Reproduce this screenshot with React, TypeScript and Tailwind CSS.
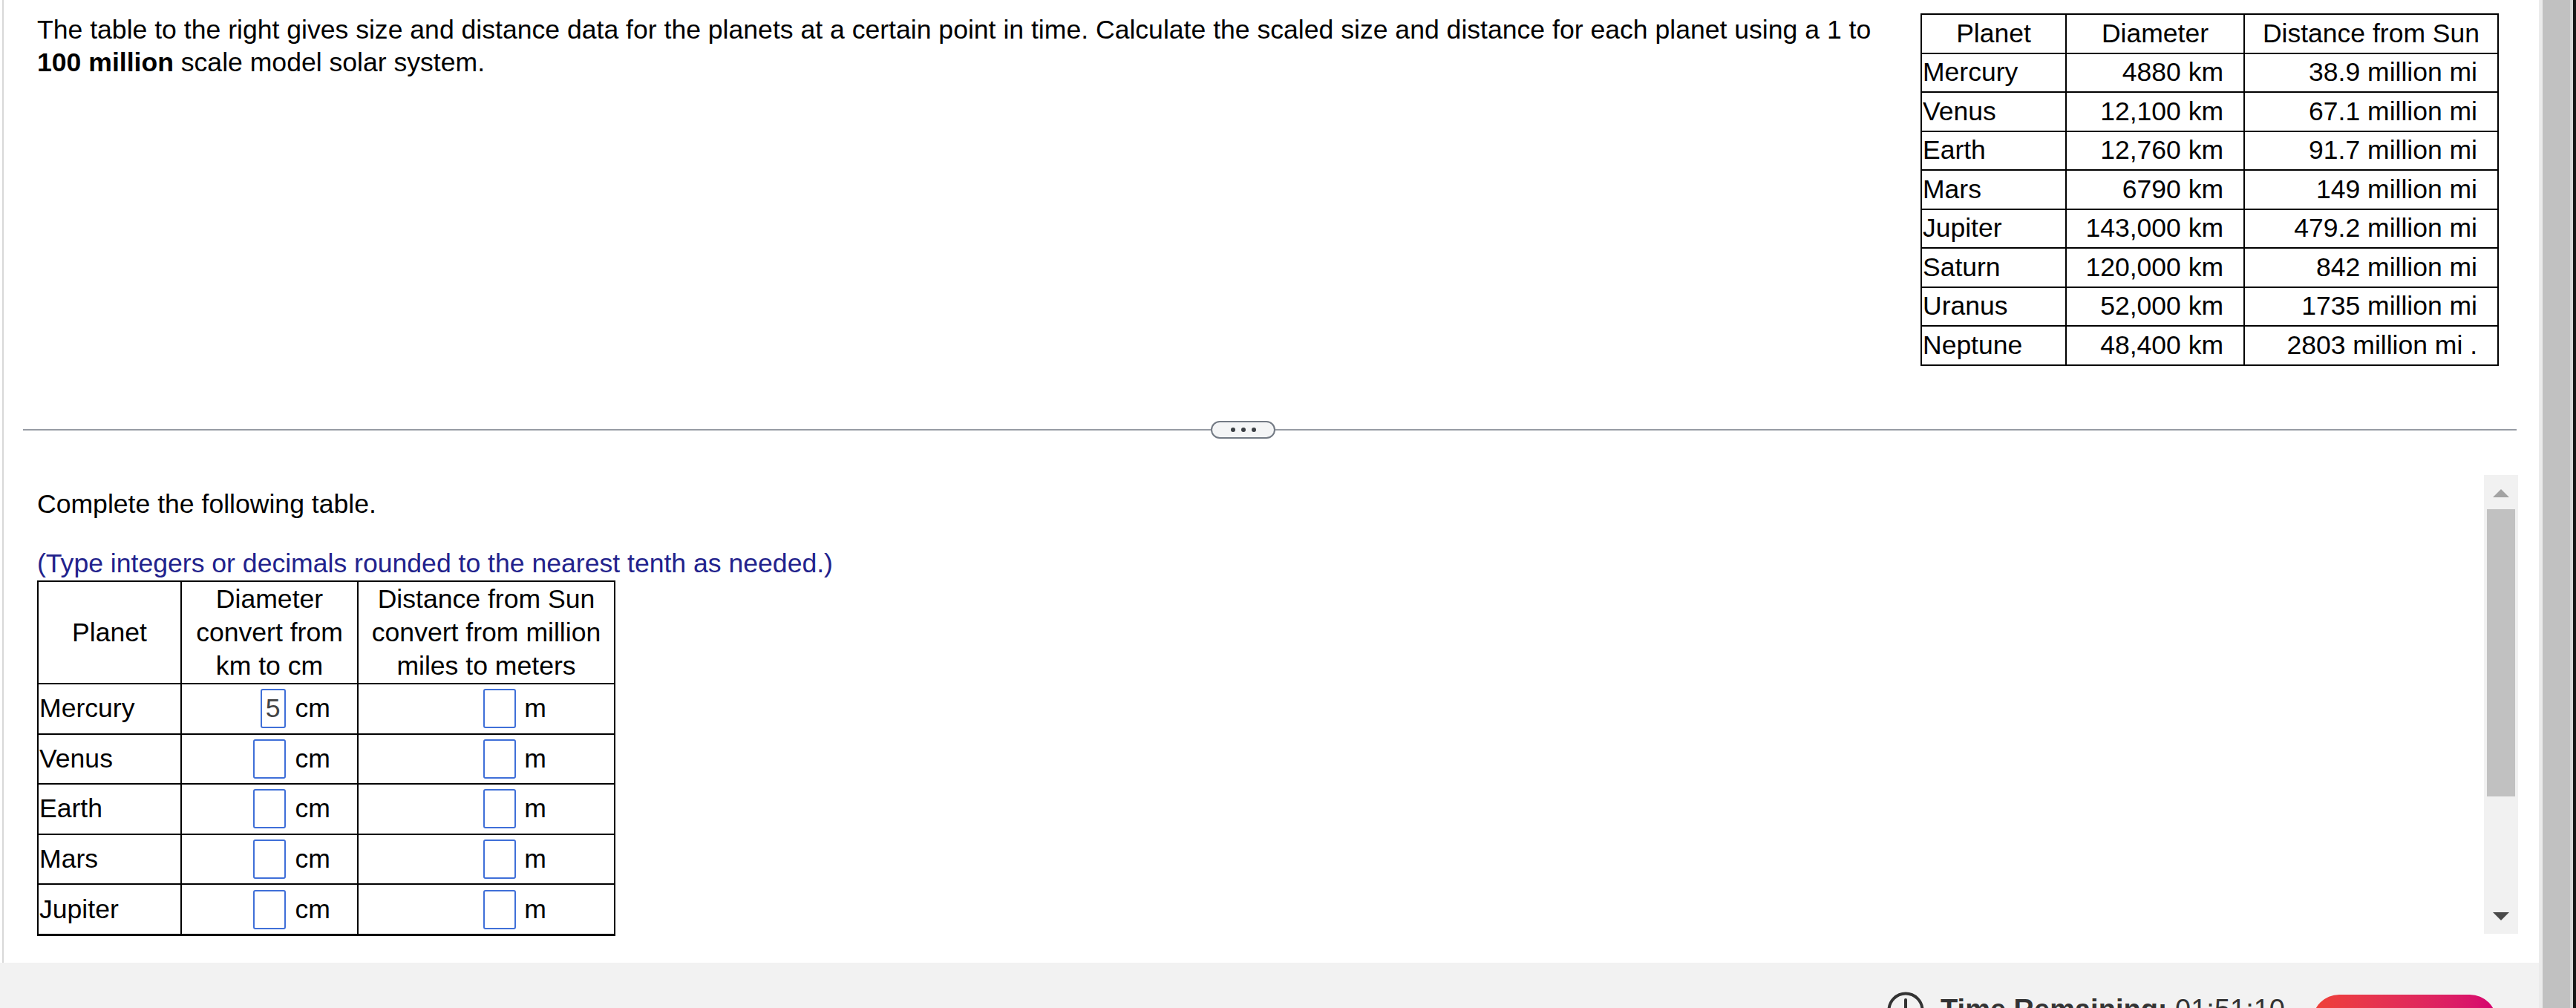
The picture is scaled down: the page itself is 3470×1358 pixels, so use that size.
import React from "react";

const planets: [string, string, string][] = [
  ["Mercury", "4880 km", "38.9 million mi"],
  ["Venus", "12,100 km", "67.1 million mi"],
  ["Earth", "12,760 km", "91.7 million mi"],
  ["Mars", "6790 km", "149 million mi"],
  ["Jupiter", "143,000 km", "479.2 million mi"],
  ["Saturn", "120,000 km", "842 million mi"],
  ["Uranus", "52,000 km", "1735 million mi"],
  ["Neptune", "48,400 km", "2803 million mi ."],
];

const answerRows = ["Mercury", "Venus", "Earth", "Mars", "Jupiter"];

function DataTable() {
  return (
    <div className="shrink-0 w-[779px] border-x-2 border-b-2 border-black text-[35.5px] leading-[43px] text-black">
      <div className="flex h-[52.5px] border-t-2 border-black">
        <div className="w-[195px] border-r-2 border-black flex items-center justify-center">Planet</div>
        <div className="w-[240px] border-r-2 border-black flex items-center justify-center">Diameter</div>
        <div className="flex-1 flex items-center justify-center">Distance from Sun</div>
      </div>
      {planets.map(([name, dia, dist]) => (
        <div key={name} className="flex h-[52.5px] border-t-2 border-black">
          <div className="w-[195px] border-r-2 border-black flex items-center pl-[1px]">{name}</div>
          <div className="w-[240px] border-r-2 border-black flex items-center justify-end pr-[27px] whitespace-pre">{dia}</div>
          <div className="flex-1 flex items-center justify-end pr-[27px] whitespace-pre">{dist}</div>
        </div>
      ))}
    </div>
  );
}

function AnswerBox({ value }: { value?: string }) {
  return (
    <div
      className={
        value
          ? "w-[34px] h-[53px] border-2 border-[#3f6fd8] rounded-[3px] bg-white flex items-center justify-center text-[#444]"
          : "w-[44px] h-[53px] border-2 border-[#3f6fd8] rounded-[3px] bg-white"
      }
    >
      {value}
    </div>
  );
}

function AnswerTable() {
  return (
    <div className="mt-px w-[779px] border-x-2 border-b-[3px] border-black text-[35.6px] text-black">
      <div className="flex h-[138px] border-t-2 border-black leading-[45px]">
        <div className="w-[193px] border-r-2 border-black flex items-center justify-center">Planet</div>
        <div className="w-[238px] border-r-2 border-black flex flex-col items-center justify-center text-center">
          <span>Diameter</span>
          <span>convert from</span>
          <span>km to cm</span>
        </div>
        <div className="flex-1 flex flex-col items-center justify-center text-center">
          <span>Distance from Sun</span>
          <span>convert from million</span>
          <span>miles to meters</span>
        </div>
      </div>
      {answerRows.map((name, i) => (
        <div key={name} className="flex h-[67.6px] border-t-2 border-black leading-[43px]">
          <div className="w-[193px] border-r-2 border-black flex items-center pl-[1px]">{name}</div>
          <div className="w-[238px] border-r-2 border-black flex items-center justify-end gap-[13px] pr-[36px]">
            <AnswerBox value={i === 0 ? "5" : undefined} />
            <span>cm</span>
          </div>
          <div className="flex-1 flex items-center justify-end gap-[11px] pr-[91px]">
            <AnswerBox />
            <span>m</span>
          </div>
        </div>
      ))}
    </div>
  );
}

function Scrollbar() {
  return (
    <div className="w-[46px] h-full bg-[#f1f1f1] flex flex-col shrink-0">
      <div className="h-[46px] flex items-center justify-center pt-[2px]">
        <div className="w-0 h-0 border-x-[11px] border-x-transparent border-b-[11px] border-b-[#a3a3a3]" />
      </div>
      <div className="mx-[4px] h-[387px] bg-[#c1c1c1]" />
      <div className="flex-1" />
      <div className="h-[46px] flex items-center justify-center pb-[2px]">
        <div className="w-0 h-0 border-x-[11px] border-x-transparent border-t-[11px] border-t-[#4a4a4a]" />
      </div>
    </div>
  );
}

function ClockIcon() {
  return (
    <svg width="50" height="50" viewBox="0 0 50 50" className="shrink-0">
      <circle cx="25" cy="25" r="22.5" fill="none" stroke="#333" strokeWidth="4" />
      <line x1="25" y1="11" x2="25" y2="27" stroke="#333" strokeWidth="4" strokeLinecap="round" />
    </svg>
  );
}

export default function App() {
  return (
    <div className="w-[3470px] h-[1358px] overflow-hidden flex bg-white font-['Liberation_Sans',Arial,sans-serif] text-black">
      <div className="w-[3420px] h-full flex flex-col">
        <div className="h-[1297px] ml-[3px] border-l-2 border-[#d8d8d8] bg-white flex flex-col">
          {/* top question section */}
          <div className="h-[567px] pt-[18px] pl-[45px] pr-[54px] flex items-start">
            <p className="flex-1 min-w-0 text-[35.6px] leading-[44px]">
              The table to the right gives size and distance data for the planets at a certain point in time. Calculate the scaled size and distance for each planet using a 1 to
              <br />
              <b>100 million</b> scale model solar system.
            </p>
            <DataTable />
          </div>

          {/* divider */}
          <div className="h-[24px] ml-[26px] mr-[30px] flex items-center">
            <div className="w-[1600px] h-[2px] bg-[#979ca4]" />
            <div className="w-[87px] h-[24px] rounded-full border-2 border-[#737a84] bg-[#f4f5f6] flex items-center justify-center gap-[8px]">
              <span className="w-[6px] h-[6px] rounded-full bg-[#3c4045]" />
              <span className="w-[6px] h-[6px] rounded-full bg-[#3c4045]" />
              <span className="w-[6px] h-[6px] rounded-full bg-[#3c4045]" />
            </div>
            <div className="flex-1 h-[2px] bg-[#979ca4]" />
          </div>

          {/* answer section */}
          <div className="mt-[49px] h-[618px] flex mr-[28px]">
            <div className="flex-1 pl-[45px] pt-[17px]">
              <p className="text-[35.6px] leading-[44px] mb-[36px]">Complete the following table.</p>
              <p className="text-[35.6px] leading-[44px] text-[#22228c]">
                (Type integers or decimals rounded to the nearest tenth as needed.)
              </p>
              <AnswerTable />
            </div>
            <Scrollbar />
          </div>
        </div>

        {/* footer */}
        <div className="h-[61px] bg-[#f2f2f2] flex justify-end items-start pr-[57px]">
          <div className="mt-[39px]">
            <ClockIcon />
          </div>
          <div className="ml-[22px] mt-[42px] text-[38px] leading-[43px] text-[#333] whitespace-pre">
            <b>Time Remaining: </b>
            <span>01:51:10</span>
          </div>
          <div className="ml-[37px] mt-[43px] w-[248px] h-[80px] rounded-[36px] bg-linear-to-r from-[#ef4136] to-[#d6006f] shrink-0" />
        </div>
      </div>

      {/* right window scrollbar strip */}
      <div className="w-[50px] h-full flex">
        <div className="w-[5px] bg-[#ebebeb]" />
        <div className="w-[37px] bg-[#c1c1c1]" />
        <div className="w-[4px] bg-[#d6d6d6]" />
        <div className="w-[4px] bg-[#161616]" />
      </div>
    </div>
  );
}
